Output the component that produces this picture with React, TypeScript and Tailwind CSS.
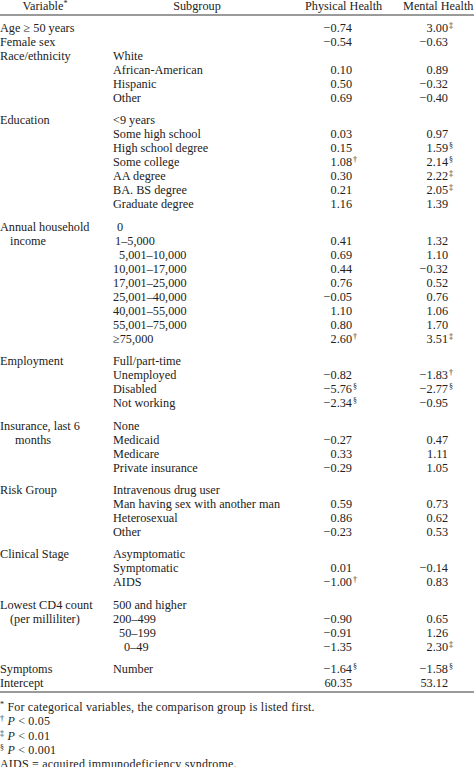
type Row = {
  v?: string
  vi?: number
  s?: string
  si?: number
  p?: string
  ps?: string
  m?: string
  ms?: string
}

const groups: Row[][] = [
  [
    { v: 'Age ≥ 50 years', p: '−0.74', m: '3.00', ms: '‡' },
    { v: 'Female sex', p: '−0.54', m: '−0.63' },
    { v: 'Race/ethnicity', s: 'White' },
    { s: 'African-American', p: '0.10', m: '0.89' },
    { s: 'Hispanic', p: '0.50', m: '−0.32' },
    { s: 'Other', p: '0.69', m: '−0.40' }
  ],
  [
    { v: 'Education', s: '<9 years' },
    { s: 'Some high school', p: '0.03', m: '0.97' },
    { s: 'High school degree', p: '0.15', m: '1.59', ms: '§' },
    { s: 'Some college', p: '1.08', ps: '†', m: '2.14', ms: '§' },
    { s: 'AA degree', p: '0.30', m: '2.22', ms: '‡' },
    { s: 'BA. BS degree', p: '0.21', m: '2.05', ms: '‡' },
    { s: 'Graduate degree', p: '1.16', m: '1.39' }
  ],
  [
    { v: 'Annual household', s: '0', si: 4 },
    { v: 'income', vi: 10, s: '1–5,000', si: 2, p: '0.41', m: '1.32' },
    { s: '5,001–10,000', si: 6, p: '0.69', m: '1.10' },
    { s: '10,001–17,000', p: '0.44', m: '−0.32' },
    { s: '17,001–25,000', p: '0.76', m: '0.52' },
    { s: '25,001–40,000', p: '−0.05', m: '0.76' },
    { s: '40,001–55,000', p: '1.10', m: '1.06' },
    { s: '55,001–75,000', p: '0.80', m: '1.70' },
    { s: '≥75,000', p: '2.60', ps: '†', m: '3.51', ms: '‡' }
  ],
  [
    { v: 'Employment', s: 'Full/part-time' },
    { s: 'Unemployed', p: '−0.82', m: '−1.83', ms: '†' },
    { s: 'Disabled', p: '−5.76', ps: '§', m: '−2.77', ms: '§' },
    { s: 'Not working', p: '−2.34', ps: '§', m: '−0.95' }
  ],
  [
    { v: 'Insurance, last 6', s: 'None' },
    { v: 'months', vi: 15, s: 'Medicaid', p: '−0.27', m: '0.47' },
    { s: 'Medicare', p: '0.33', m: '1.11' },
    { s: 'Private insurance', p: '−0.29', m: '1.05' }
  ],
  [
    { v: 'Risk Group', s: 'Intravenous drug user' },
    { s: 'Man having sex with another man', p: '0.59', m: '0.73' },
    { s: 'Heterosexual', p: '0.86', m: '0.62' },
    { s: 'Other', p: '−0.23', m: '0.53' }
  ],
  [
    { v: 'Clinical Stage', s: 'Asymptomatic' },
    { s: 'Symptomatic', p: '0.01', m: '−0.14' },
    { s: 'AIDS', p: '−1.00', ps: '†', m: '0.83' }
  ],
  [
    { v: 'Lowest CD4 count', s: '500 and higher' },
    { v: '(per milliliter)', vi: 10, s: '200–499', p: '−0.90', m: '0.65' },
    { s: '50–199', si: 6, p: '−0.91', m: '1.26' },
    { s: '0–49', si: 11, p: '−1.35', m: '2.30', ms: '‡' }
  ],
  [
    { v: 'Symptoms', s: 'Number', p: '−1.64', ps: '§', m: '−1.58', ms: '§' },
    { v: 'Intercept', p: '60.35', m: '53.12' }
  ]
]

function Sup({ c }: { c?: string }) {
  return <span className="self-start pt-[1px] pl-[1px] text-[8px] leading-none">{c}</span>
}

function DataRow({ r }: { r: Row }) {
  return (
    <div className="grid h-[14px] grid-cols-[113px_190px_49px_8px_88px_1fr] leading-[14px] whitespace-nowrap">
      <span style={{ paddingLeft: r.vi ?? 0 }}>{r.v}</span>
      <span style={{ paddingLeft: r.si ?? 0 }}>{r.s}</span>
      <span className="text-right">{r.p}</span>
      <Sup c={r.ps} />
      <span className="text-right">{r.m}</span>
      <Sup c={r.ms} />
    </div>
  )
}

export default function App() {
  return (
    <div className="h-[767px] w-[474px] overflow-hidden bg-white font-['Liberation_Serif',serif] text-[12.25px] text-[#222]">
      {/* column heads */}
      <div className="flex h-[12px] leading-[12px] whitespace-nowrap">
        <span className="w-[90px] text-center">
          Variable<sup className="text-[8px]">*</sup>
        </span>
        <span className="w-[214px] text-center">Subgroup</span>
        <span className="w-[99px] pl-[1px]">Physical Health</span>
        <span>Mental Health</span>
      </div>
      <div className="mt-[2px] h-[2px] bg-[#9a9a9a]" />

      <div className="pt-[5px]">
        {groups.map((g, gi) => (
          <div key={gi} className={gi ? 'mt-[8.4px]' : ''}>
            {g.map((r, ri) => (
              <DataRow key={ri} r={r} />
            ))}
          </div>
        ))}
      </div>

      <div className="mt-[1px] h-[2px] bg-[#9a9a9a]" />

      <div className="pt-[7px] text-[12px] leading-[14.25px] tracking-[0.2px]">
        <p>
          <sup className="text-[8px]">*</sup> For categorical variables, the comparison group is listed first.
        </p>
        <p>
          <sup className="text-[8px]">†</sup> <i>P</i> &lt; 0.05
        </p>
        <p>
          <sup className="text-[8px]">‡</sup> <i>P</i> &lt; 0.01
        </p>
        <p>
          <sup className="text-[8px]">§</sup> <i>P</i> &lt; 0.001
        </p>
        <p>AIDS = acquired immunodeficiency syndrome.</p>
      </div>
    </div>
  )
}
